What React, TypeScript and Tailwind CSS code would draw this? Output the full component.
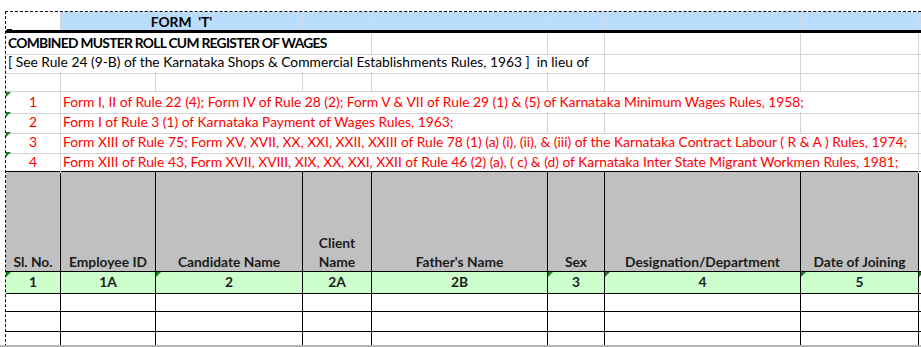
import React from "react";

const GRID = "grid grid-cols-[55px_95px_147px_69px_176px_57px_196px_118px_1fr]";

const Tri = () => (
  <span className="absolute top-0 left-0 w-0 h-0 border-t-[5px] border-r-[5px] border-t-[#1e7b1e] border-r-transparent" />
);

type CellProps = {
  span?: string;
  className?: string;
  tri?: boolean;
  children?: React.ReactNode;
};

const Cell = ({ span = "", className = "", tri = false, children }: CellProps) => (
  <div className={`relative flex items-center overflow-visible whitespace-pre ${span} ${className}`}>
    {tri && <Tri />}
    {children}
  </div>
);

// top area cells: light gridlines
const g = "border-r border-b border-[#d4d4d4]";

const rules = [
  { no: "1", text: "Form I, II of Rule 22 (4); Form IV of Rule 28 (2); Form V & VII of Rule 29 (1) & (5) of Karnataka Minimum Wages Rules, 1958;", wide: true },
  { no: "2", text: "Form I of Rule 3 (1) of Karnataka Payment of Wages Rules, 1963;", wide: false },
  { no: "3", text: "Form XIII of Rule 75; Form XV, XVII, XX, XXI, XXII, XXIII of Rule 78 (1) (a) (i), (ii), & (iii) of the Karnataka Contract Labour ( R & A ) Rules, 1974;", wide: true },
  { no: "4", text: "Form XIII of Rule 43, Form XVII, XVIII, XIX, XX, XXI, XXII of Rule 46 (2) (a), ( c) & (d) of Karnataka Inter State Migrant Workmen Rules, 1981;", wide: true },
];

const headers = [
  "Sl. No.",
  "Employee ID",
  "Candidate Name",
  "Client\nName",
  "Father's Name",
  "Sex",
  "Designation/Department",
  "Date of Joining",
];

const codes = [
  { t: "1", tri: true },
  { t: "1A", tri: false },
  { t: "2", tri: true },
  { t: "2A", tri: false },
  { t: "2B", tri: false },
  { t: "3", tri: true },
  { t: "4", tri: true },
  { t: "5", tri: true },
];

const b = "border-r border-b border-black";

export default function App() {
  return (
    <div className="w-[921px] h-[347px] overflow-hidden bg-white flex flex-col font-['Lato',sans-serif] text-[13.8px] text-black">
      <div className="flex-1 overflow-hidden pt-[11px]">
        <div className="ml-[5px] border-l border-t border-dashed border-black">
          {/* FORM 'T' */}
          <div className={`${GRID} h-[18px]`}>
            <Cell className="border-r border-[#d4d4d4]" />
            <Cell span="col-span-2" className="bg-[#badcfd] border-r border-[#d2dbe6] justify-center font-bold">
              {"FORM  'T'"}
            </Cell>
            <Cell className="bg-[#badcfd] border-r border-[#d2dbe6]" />
            <Cell className="bg-[#badcfd] border-r border-[#d2dbe6]" />
            <Cell className="bg-[#badcfd] border-r border-[#d2dbe6]" />
            <Cell className="bg-[#badcfd] border-r border-[#d2dbe6]" />
            <Cell className="bg-[#badcfd] border-r border-[#d2dbe6]" />
            <Cell className="bg-[#badcfd]" />
          </div>
          <div className="relative h-[3px] bg-black">
            <span className="absolute left-[1px] -top-[1px] w-[5px] h-[4px] bg-black" />
          </div>

          {/* title */}
          <div className={`${GRID} h-[19px]`}>
            <Cell span="col-span-4" className={`${g} pl-[2px] font-bold tracking-[-0.7px]`}>
              COMBINED MUSTER ROLL CUM REGISTER OF WAGES
            </Cell>
            <Cell className={g} />
            <Cell className={g} />
            <Cell className={g} />
            <Cell className={g} />
            <Cell className="border-b border-[#d4d4d4]" />
          </div>
          <div className={`${GRID} h-[20px]`}>
            <Cell span="col-span-6" className={`${g} pl-[2px]`}>
              {"[ See Rule 24 (9-B) of the Karnataka Shops & Commercial Establishments Rules, 1963 ]  in lieu of"}
            </Cell>
            <Cell className={g} />
            <Cell className={g} />
            <Cell className="border-b border-[#d4d4d4]" />
          </div>
          <div className={`${GRID} h-[20px]`}>
            {[0, 1, 2, 3, 4, 5, 6, 7].map((i) => (
              <Cell key={i} className={g} />
            ))}
            <Cell className="border-b border-[#d4d4d4]" />
          </div>

          {/* rules list */}
          {rules.map((r, i) => (
            <div key={r.no} className={`${GRID} ${i === 3 ? "h-[19px]" : "h-[20px]"} text-[#ff0000]`}>
              <Cell tri className={`${i === 3 ? "border-r" : g} border-[#d4d4d4] justify-center`}>
                {r.no}
              </Cell>
              {r.wide ? (
                <Cell span="col-span-7" className={`${i === 3 ? "border-r" : g} border-[#d4d4d4] pl-[2px]`}>
                  {r.text}
                </Cell>
              ) : (
                <>
                  <Cell span="col-span-4" className={`${g} pl-[2px]`}>
                    {r.text}
                  </Cell>
                  <Cell className={g} />
                  <Cell className={g} />
                  <Cell className={g} />
                </>
              )}
              <Cell className={i === 3 ? "" : "border-b border-[#d4d4d4]"} />
            </div>
          ))}

          {/* table header */}
          <div className={`${GRID} h-[101px] border-t border-black font-bold text-[#1c1c1c]`}>
            {headers.map((h) => (
              <div
                key={h}
                className={`${b} bg-[#c0c0c0] flex items-end justify-center text-center whitespace-pre leading-[19px]`}
              >
                {h}
              </div>
            ))}
            <div className="border-b border-black" />
          </div>
          <div className={`${GRID} h-[20px] font-bold text-[#1c1c1c]`}>
            {codes.map((c) => (
              <Cell key={c.t} tri={c.tri} className={`${b} bg-[#ccffcc] justify-center`}>
                {c.t}
              </Cell>
            ))}
            <Cell tri className="border-b border-black" />
          </div>
          {[0, 1, 2].map((r) => (
            <div key={r} className={`${GRID} h-[20px]`}>
              {[0, 1, 2, 3, 4, 5, 6, 7].map((i) => (
                <Cell key={i} className={b} />
              ))}
              <Cell className="border-b border-black" />
            </div>
          ))}
        </div>
      </div>
      <div className="h-[2px] bg-[#b4b4b4]" />
    </div>
  );
}
